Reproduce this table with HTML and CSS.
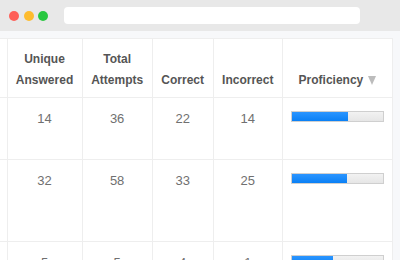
FILE: index.html
```html
<!DOCTYPE html>
<html>
<head>
<meta charset="utf-8">
<link rel="stylesheet" href="styles.css">
</head>
<body>
<div class="window">
  <div class="titlebar">
    <div class="dots">
      <span class="dot red"></span>
      <span class="dot yellow"></span>
      <span class="dot green"></span>
    </div>
    <div class="address"></div>
  </div>
  <div class="content">
    <table class="grid">
      <colgroup>
        <col class="c0"><col class="c1"><col class="c2"><col class="c3"><col class="c4"><col class="c5">
      </colgroup>
      <thead>
        <tr>
          <th></th>
          <th>Unique<br>Answered</th>
          <th>Total<br>Attempts</th>
          <th>Correct</th>
          <th>Incorrect</th>
          <th>Proficiency<span class="sort"></span></th>
        </tr>
      </thead>
      <tbody>
        <tr class="row-a">
          <td></td><td>14</td><td>36</td><td>22</td><td>14</td>
          <td><div class="bar"><div class="fill" style="width:62%"></div></div></td>
        </tr>
        <tr class="row-b">
          <td></td><td>32</td><td>58</td><td>33</td><td>25</td>
          <td><div class="bar"><div class="fill" style="width:60%"></div></div></td>
        </tr>
        <tr class="row-a">
          <td></td><td>5</td><td>5</td><td>4</td><td>1</td>
          <td><div class="bar"><div class="fill" style="width:45%"></div></div></td>
        </tr>
      </tbody>
    </table>
  </div>
</div>
</body>
</html>
```
FILE: styles.css
```css
html, body {
  margin: 0;
  padding: 0;
  width: 400px;
  height: 260px;
  overflow: hidden;
  background: #f7f8fa;
  font-family: "Liberation Sans", Arial, sans-serif;
}

.window {
  width: 400px;
  height: 260px;
  display: flex;
  flex-direction: column;
  overflow: hidden;
}

.titlebar {
  height: 31px;
  flex: none;
  background: #e8e8e8;
  display: flex;
  align-items: center;
  padding-left: 9px;
  gap: 16px;
  box-sizing: border-box;
}

.dots {
  display: flex;
  gap: 4.5px;
  margin-top: 1px;
}

.dot {
  width: 10px;
  height: 10px;
  border-radius: 50%;
  display: block;
}
.red { background: #fe5f58; }
.yellow { background: #febc2e; }
.green { background: #29c740; }

.address {
  width: 296px;
  height: 17px;
  background: #ffffff;
  border-radius: 4px;
}

.content {
  flex: 1;
  padding-top: 7px;
  overflow: hidden;
}

.grid {
  width: 393px;
  table-layout: fixed;
  border-collapse: collapse;
  background: #ffffff;
}

.c0 { width: 7px; }
.c1 { width: 75px; }
.c2 { width: 70px; }
.c3 { width: 61px; }
.c4 { width: 69px; }
.c5 { width: 110px; }

.grid th, .grid td {
  border: 1px solid #eeeeee;
  text-align: center;
  padding: 0 8px;
}

.grid th:first-child, .grid td:first-child {
  border-left: none;
  padding: 0;
}

.grid th {
  height: 59px;
  vertical-align: bottom;
  padding-bottom: 6px;
  font-size: 12px;
  line-height: 21px;
  font-weight: bold;
  color: #555555;
  box-sizing: border-box;
}

.sort {
  display: inline-block;
  width: 0;
  height: 0;
  border-left: 4.5px solid transparent;
  border-right: 4.5px solid transparent;
  border-top: 9px solid #bcbcbc;
  margin-left: 5px;
  vertical-align: -1px;
}

.grid td {
  vertical-align: top;
  padding-top: 12px;
  font-size: 13px;
  line-height: 18px;
  color: #707070;
}

.row-a { height: 62px; }
.row-b { height: 82px; }

.bar {
  margin-top: 1px;
  height: 11px;
  box-sizing: border-box;
  border: 1px solid #cfcfcf;
  background: linear-gradient(#f2f2f2, #e6e6e6);
  display: flex;
}

.fill {
  height: 100%;
  background: linear-gradient(#2b95ff, #0a80f5);
}
```
